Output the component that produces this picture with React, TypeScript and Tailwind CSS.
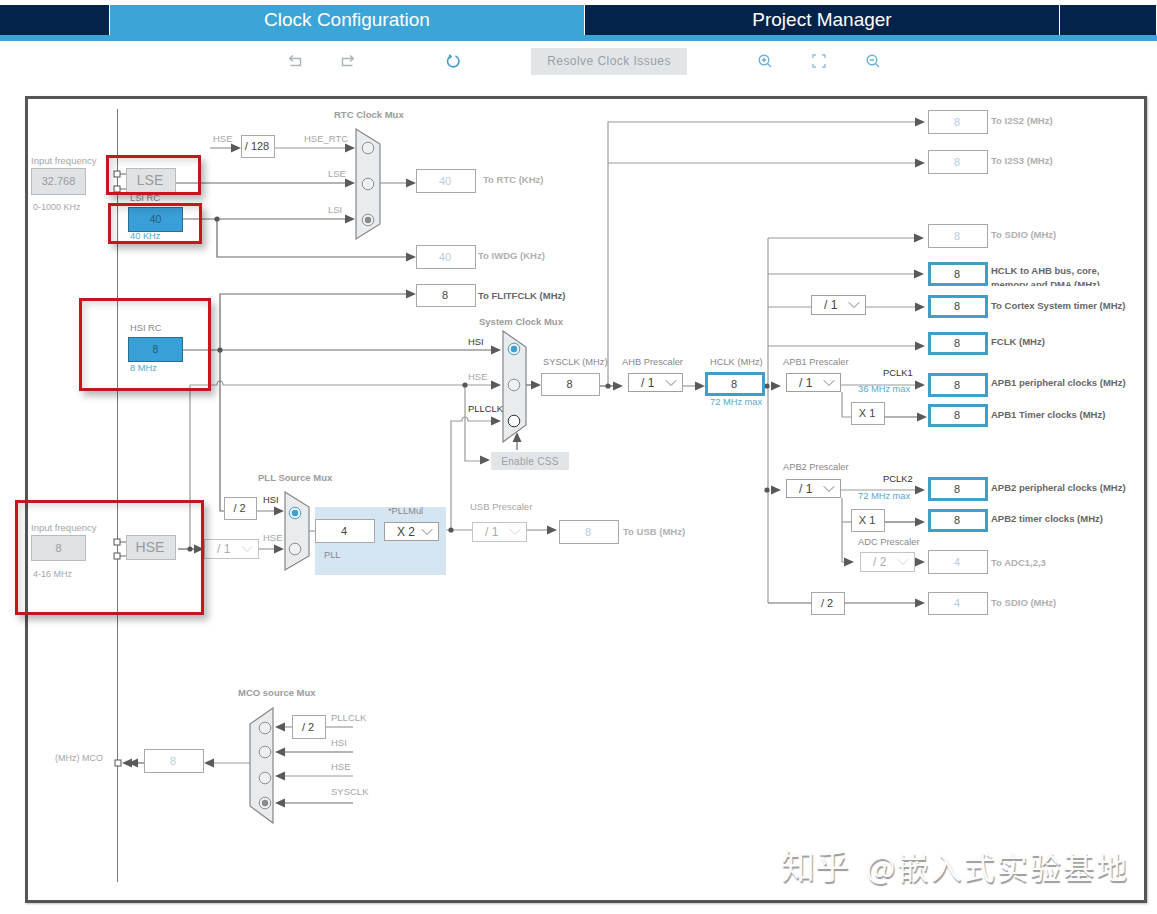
import type { ReactNode } from 'react';
import { ChevronDown } from 'lucide-react';

// everything on the canvas is given in page coordinates, the border box starts at 28,99
const OX = 28;
const OY = 99;

type Tone = 'title' | 'gray' | 'small' | 'dark' | 'blue' | 'strong' | 'muted' | 'outer';

const toneClass: Record<Tone, string> = {
  title: 'font-bold text-[#9c9c9c] text-[9.5px]',
  gray: 'text-[#a6a6a6] text-[9.5px]',
  small: 'text-[#a6a6a6] text-[9px]',
  dark: 'text-[#333] text-[9.4px]',
  blue: 'text-[#55a9cf] text-[9.3px]',
  strong: 'font-bold text-[#666] text-[9.5px]',
  muted: 'font-bold text-[#b0b0b0] text-[9.5px]',
  outer: 'text-[#888] text-[9.3px]',
};

const labels: [number, number, Tone, string][] = [
  [334, 115, 'title', 'RTC Clock Mux'],
  [213, 139, 'gray', 'HSE'],
  [304, 139, 'gray', 'HSE_RTC'],
  [31, 161, 'gray', 'Input frequency'],
  [33, 207, 'small', '0-1000 KHz'],
  [328, 174, 'gray', 'LSE'],
  [328, 210, 'gray', 'LSI'],
  [130, 199, 'outer', 'LSI RC'],
  [130, 237, 'blue', '40 KHz'],
  [483, 180, 'muted', 'To RTC (KHz)'],
  [478, 256, 'muted', 'To IWDG (KHz)'],
  [478, 296, 'strong', 'To FLITFCLK (MHz)'],
  [130, 329, 'outer', 'HSI RC'],
  [130, 369, 'blue', '8 MHz'],
  [479, 322, 'title', 'System Clock Mux'],
  [468, 342, 'dark', 'HSI'],
  [468, 377, 'gray', 'HSE'],
  [468, 409, 'dark', 'PLLCLK'],
  [543, 363, 'outer', 'SYSCLK (MHz)'],
  [622, 363, 'outer', 'AHB Prescaler'],
  [710, 363, 'outer', 'HCLK (MHz)'],
  [710, 403, 'blue', '72 MHz max'],
  [783, 363, 'outer', 'APB1 Prescaler'],
  [883, 373, 'dark', 'PCLK1'],
  [858, 390, 'blue', '36 MHz max'],
  [783, 468, 'outer', 'APB2 Prescaler'],
  [883, 479, 'dark', 'PCLK2'],
  [858, 497, 'blue', '72 MHz max'],
  [858, 543, 'outer', 'ADC Prescaler'],
  [258, 478, 'title', 'PLL Source Mux'],
  [263, 500, 'dark', 'HSI'],
  [263, 538, 'gray', 'HSE'],
  [31, 528, 'gray', 'Input frequency'],
  [33, 574, 'small', '4-16 MHz'],
  [388, 512, 'outer', '*PLLMul'],
  [324, 556, 'outer', 'PLL'],
  [470, 507, 'gray', 'USB Prescaler'],
  [623, 532, 'muted', 'To USB (MHz)'],
  [991, 121, 'muted', 'To I2S2 (MHz)'],
  [991, 161, 'muted', 'To I2S3 (MHz)'],
  [991, 235, 'muted', 'To SDIO (MHz)'],
  [991, 271, 'strong', 'HCLK to AHB bus, core,'],
  [991, 306, 'strong', 'To Cortex System timer (MHz)'],
  [991, 342, 'strong', 'FCLK (MHz)'],
  [991, 383, 'strong', 'APB1 peripheral clocks (MHz)'],
  [991, 415, 'strong', 'APB1 Timer clocks (MHz)'],
  [991, 488, 'strong', 'APB2 peripheral clocks (MHz)'],
  [991, 519, 'strong', 'APB2 timer clocks (MHz)'],
  [991, 563, 'muted', 'To ADC1,2,3'],
  [991, 603, 'muted', 'To SDIO (MHz)'],
  [238, 693, 'title', 'MCO source Mux'],
  [331, 718, 'gray', 'PLLCLK'],
  [331, 743, 'gray', 'HSI'],
  [331, 767, 'gray', 'HSE'],
  [331, 792, 'gray', 'SYSCLK'],
  [55, 758, 'small', '(MHz) MCO'],
];

type BoxKind = 'off' | 'on' | 'plain' | 'input' | 'source' | 'rc';

const boxClass: Record<BoxKind, string> = {
  off: 'bg-white border border-[#a8a8a8] pr-[2px] text-[#b9cdda] text-[11px]',
  on: 'bg-white border-[3px] border-[#3f9fc9] pr-[2px] text-[#444] text-[11px]',
  plain: 'bg-white border border-[#a8a8a8] pr-[2px] text-[#444] text-[11px]',
  input: 'bg-[#dfe3e6] border border-[#b9bcbf] text-[#9a9a9a] text-[11px]',
  source: 'bg-[#dfe3e6] border border-[#b9bcbf] pr-[2px] text-[#9a9a9a] text-[14px]',
  rc: 'bg-[#399fd8] border border-[#2c6d8c] text-[#2d5a72] text-[10.5px]',
};

const boxes: [number, number, number, number, BoxKind, string][] = [
  [241, 135, 34, 23, 'plain', '/ 128'],
  [416, 169, 60, 24, 'off', '40'],
  [416, 245, 60, 24, 'off', '40'],
  [416, 284, 60, 23, 'plain', '8'],
  [31, 168, 55, 27, 'input', '32.768'],
  [126, 168, 50, 25, 'source', 'LSE'],
  [128, 207, 55, 25, 'rc', '40'],
  [128, 337, 55, 25, 'rc', '8'],
  [31, 535, 55, 26, 'input', '8'],
  [126, 535, 50, 25, 'source', 'HSE'],
  [224, 497, 33, 23, 'plain', '/ 2'],
  [315, 519, 60, 24, 'plain', '4'],
  [541, 373, 59, 23, 'plain', '8'],
  [705, 372, 60, 24, 'on', '8'],
  [559, 520, 60, 24, 'off', '8'],
  [928, 110, 60, 24, 'off', '8'],
  [928, 150, 60, 24, 'off', '8'],
  [928, 224, 60, 24, 'off', '8'],
  [928, 262, 60, 24, 'on', '8'],
  [928, 295, 60, 23, 'on', '8'],
  [928, 332, 60, 23, 'on', '8'],
  [928, 373, 60, 24, 'on', '8'],
  [928, 404, 60, 23, 'on', '8'],
  [928, 477, 60, 24, 'on', '8'],
  [928, 509, 60, 23, 'on', '8'],
  [928, 550, 60, 24, 'off', '4'],
  [928, 592, 60, 23, 'off', '4'],
  [851, 402, 34, 23, 'plain', 'X 1'],
  [851, 509, 34, 23, 'plain', 'X 1'],
  [811, 592, 34, 23, 'plain', '/ 2'],
  [292, 715, 34, 24, 'plain', '/ 2'],
  [144, 749, 60, 24, 'off', '8'],
];

const selects: [number, number, number, number, string, boolean][] = [
  [204, 539, 55, 20, '/ 1', true],
  [384, 522, 55, 19, 'X 2', false],
  [472, 522, 55, 20, '/ 1', true],
  [628, 373, 55, 19, '/ 1', false],
  [786, 373, 55, 19, '/ 1', false],
  [786, 479, 55, 19, '/ 1', false],
  [811, 295, 55, 20, '/ 1', false],
  [860, 552, 55, 20, '/ 2', true],
];

const redBoxes: [number, number, number, number][] = [
  [106, 155, 95, 40],
  [108, 203, 94, 41],
  [79, 298, 132, 93],
  [15, 500, 189, 115],
];

const lightWires = [
  'M210 148H232', 'M275 148H347', 'M380 183H406',
  'M608 386V122H916', 'M608 163H916',
  'M768 238V603', 'M768 238H915', 'M768 274H915', 'M768 307H811', 'M866 307H916', 'M768 346H916',
  'M683 386H696', 'M841 385H916', 'M841 490H916', 'M842 392V417H851', 'M842 498V562H846', 'M842 522H851',
  'M190 549V385H217a3 4 0 0 1 6 0H492',
  'M257 511H275', 'M259 549H275', 'M309 531H315', 'M375 530H384', 'M439 530H472', 'M527 530H548',
  'M451 530V421H462a3 4 0 0 1 6 0H492',
  'M465 385V461H481',
  'M285 727H292', 'M326 727H353', 'M285 776H353', 'M250 763H214',
];

const darkWires = [
  'M176 183H347', 'M183 219H347', 'M217 219V257H407',
  'M224 511H220V294H407',
  'M183 350H492', 'M178 549H198', 'M526 385H532', 'M600 386H613',
  'M885 417H918', 'M885 522H916', 'M845 603H916', 'M768 603H811',
  'M517 450V440', 'M285 752H353', 'M285 803H353', 'M144 763H134',
  'M120 174H126M120 189H126M120 542H126M120 556H126',
];

// arrow tips pointing right
const rightTips: [number, number][] = [
  [241, 148], [355, 148], [355, 183], [355, 219], [416, 183], [416, 257], [416, 294],
  [501, 350], [501, 385], [501, 421], [541, 385], [623, 386], [705, 386], [781, 386], [781, 490],
  [925, 122], [925, 163], [924, 238], [924, 274], [925, 307], [925, 346], [925, 385], [927, 417],
  [925, 490], [925, 522], [854, 562], [925, 562], [925, 603],
  [204, 549], [284, 511], [284, 549], [557, 530], [490, 460],
];

const leftTips: [number, number][] = [
  [275, 727], [275, 752], [275, 776], [275, 803], [204, 763], [122, 763], [128, 763],
];

const dots: [number, number][] = [
  [217, 219], [220, 350], [465, 385], [190, 549], [451, 530], [608, 386], [767, 386], [767, 490],
];

const muxes: [string, [number, number, 'off' | 'blue' | 'gray' | 'dark'][]][] = [
  ['356,129 380,144 380,224 356,239', [[368, 148, 'off'], [368, 184, 'off'], [368, 220, 'gray']]],
  ['503,331 526,347 526,425 503,442', [[514, 349, 'blue'], [514, 385, 'off'], [514, 421, 'dark']]],
  ['285,492 309,507 309,556 285,570', [[295, 513, 'blue'], [295, 549, 'off']]],
  ['273,708 250,724 250,806 273,823', [[265, 728, 'off'], [265, 752, 'off'], [265, 778, 'off'], [265, 803, 'gray']]],
];

const ports: [number, number][] = [
  [117, 174], [117, 189], [117, 542], [117, 556], [118, 763],
];

function Wires() {
  return (
    <svg className="absolute left-[-28px] top-[-99px] pointer-events-none" width={1157} height={914}>
      <path d="M117.5 109V882" stroke="#777" fill="none" />
      {lightWires.map((d) => (
        <path key={d} d={d} stroke="#9a9a9a" strokeWidth={1.2} fill="none" />
      ))}
      {darkWires.map((d) => (
        <path key={d} d={d} stroke="#6b6b6b" strokeWidth={1.2} fill="none" />
      ))}
      {rightTips.map(([x, y]) => (
        <polygon key={`r${x}-${y}`} points={`${x - 10},${y - 4.5} ${x},${y} ${x - 10},${y + 4.5}`} fill="#5a5a5a" />
      ))}
      {leftTips.map(([x, y]) => (
        <polygon key={`l${x}-${y}`} points={`${x + 10},${y - 4.5} ${x},${y} ${x + 10},${y + 4.5}`} fill="#5a5a5a" />
      ))}
      <polygon points="517,432 512.5,442 521.5,442" fill="#5a5a5a" />
      {dots.map(([x, y]) => (
        <circle key={`d${x}-${y}`} cx={x} cy={y} r={2.6} fill="#555" />
      ))}
      {muxes.map(([points, radios]) => (
        <g key={points}>
          <polygon points={points} fill="#e8ecef" stroke="#858585" strokeWidth={1.2} />
          {radios.map(([x, y, kind]) => (
            <g key={y}>
              <circle
                cx={x}
                cy={y}
                r={5.8}
                fill={kind === 'dark' ? '#fff' : '#eef1f3'}
                stroke={kind === 'blue' ? '#45a3cf' : kind === 'dark' ? '#333' : '#8f8f8f'}
              />
              {kind === 'blue' && <circle cx={x} cy={y} r={3.2} fill="#3f9fd0" />}
              {kind === 'gray' && <circle cx={x} cy={y} r={3.2} fill="#8a8a8a" />}
            </g>
          ))}
        </g>
      ))}
      {ports.map(([x, y]) => (
        <rect key={`${x}-${y}`} x={x - 3} y={y - 3} width={6} height={6} fill="#fff" stroke="#555" />
      ))}
    </svg>
  );
}

function Label({ x, y, tone, children }: { x: number; y: number; tone: Tone; children: ReactNode }) {
  return (
    <span
      className={`absolute -translate-y-1/2 whitespace-nowrap leading-none ${toneClass[tone]}`}
      style={{ left: x - OX, top: y - OY }}
    >
      {children}
    </span>
  );
}

function Box({ x, y, w, h, kind, children }: { x: number; y: number; w: number; h: number; kind: BoxKind; children: ReactNode }) {
  return (
    <div
      className={`absolute flex items-center justify-center ${boxClass[kind]}`}
      style={{ left: x - OX, top: y - OY, width: w, height: h }}
    >
      {children}
    </div>
  );
}

function Select({ x, y, w, h, text, disabled }: { x: number; y: number; w: number; h: number; text: string; disabled: boolean }) {
  return (
    <div
      className={`absolute flex items-center justify-between bg-white border pl-[12px] pr-[1px] text-[12px] ${
        disabled ? 'border-[#c4c4c4] text-[#aaa]' : 'border-[#a0a0a0] text-[#444]'
      }`}
      style={{ left: x - OX, top: y - OY, width: w, height: h }}
    >
      <span>{text}</span>
      <ChevronDown size={20} strokeWidth={0.9} className={disabled ? 'text-[#c4c4c4]' : 'text-[#555]'} />
    </div>
  );
}

function Tab({ w, active, children }: { w: string; active?: boolean; children?: ReactNode }) {
  return (
    <div
      className={`${w} flex items-center justify-center border-r border-white text-[19px] font-medium text-white ${
        active ? 'bg-[#3ba5d8]' : 'bg-[#03234b]'
      }`}
    >
      {children}
    </div>
  );
}

function ToolIcon({ className, children }: { className: string; children: ReactNode }) {
  return (
    <svg className={className} width={14} height={14} viewBox="0 0 14 14" fill="none" strokeWidth={1.4}>
      {children}
    </svg>
  );
}

export default function App() {
  return (
    <div className="w-[1157px] h-[914px] bg-white font-['Liberation_Sans',Arial,sans-serif] overflow-hidden">
      {/* top tabs */}
      <div className="pt-[5px]">
        <div className="flex h-[30px]">
          <Tab w="w-[110px]" />
          <Tab w="w-[475px]" active>Clock Configuration</Tab>
          <Tab w="w-[475px]">Project Manager</Tab>
          <Tab w="flex-1" />
        </div>
        <div className="h-[6px] bg-[#3ba5d8]" />
      </div>

      {/* toolbar */}
      <div className="flex items-center h-[40px] pl-[288px]">
        <ToolIcon className="stroke-[#aab3b9]">
          <path d="M1.5 4.5H12.5V11.5H2.5M1.5 4.5L5 1.5M1.5 4.5L5 7.5" />
        </ToolIcon>
        <ToolIcon className="stroke-[#aab3b9] ml-[39px]">
          <path d="M12.5 4.5H1.5V11.5H11.5M12.5 4.5L9 1.5M12.5 4.5L9 7.5" />
        </ToolIcon>
        <ToolIcon className="stroke-[#3f9fc9] ml-[91px]">
          <path d="M4.4 2.2A5.7 5.7 0 1 0 9.5 1.9" strokeWidth={1.6} />
          <path d="M3 0.8L5.2 2.4L3.4 4.4" />
        </ToolIcon>
        <button className="ml-[71px] w-[156px] h-[27px] bg-[#e2e5e8] text-[12px] tracking-[0.45px] text-[#9aa0a5]">
          Resolve Clock Issues
        </button>
        <ToolIcon className="stroke-[#6fb3d2] ml-[71px]">
          <circle cx={6} cy={6} r={4.8} />
          <path d="M9.5 9.5L13 13M6 3.8V8.2M3.8 6H8.2" />
        </ToolIcon>
        <ToolIcon className="stroke-[#8fc0d8] ml-[40px]">
          <path d="M1 4V1H4M10 1H13V4M13 10V13H10M4 13H1V10" />
        </ToolIcon>
        <ToolIcon className="stroke-[#6fb3d2] ml-[40px]">
          <circle cx={6} cy={6} r={4.8} />
          <path d="M9.5 9.5L13 13M3.8 6H8.2" />
        </ToolIcon>
      </div>

      {/* clock tree canvas */}
      <div className="relative ml-[25px] mt-[15px] w-[1122px] h-[807px] border-[3px] border-[#555] shadow-[1px_1px_2px_rgba(0,0,0,0.25)]">
        <Wires />

        {/* PLL panel */}
        <div className="absolute left-[287px] top-[408px] w-[131px] h-[68px] bg-[#d6e5f2]" />

        {/* Enable CSS button */}
        <div className="absolute left-[463px] top-[353px] w-[78px] h-[18px] flex items-center justify-center bg-[#e2e5e8] text-[10px] tracking-[0.3px] text-[#9a9fa3]">
          Enable CSS
        </div>

        {boxes.map(([x, y, w, h, kind, text]) => (
          <Box key={`${x}-${y}`} x={x} y={y} w={w} h={h} kind={kind}>{text}</Box>
        ))}
        {selects.map(([x, y, w, h, text, disabled]) => (
          <Select key={`${x}-${y}`} x={x} y={y} w={w} h={h} text={text} disabled={disabled} />
        ))}
        {labels.map(([x, y, tone, text]) => (
          <Label key={`${x}-${y}-${text}`} x={x} y={y} tone={tone}>{text}</Label>
        ))}

        {/* second line of this label is cut by its row */}
        <div className="absolute left-[963px] top-[179px] h-[8px] overflow-hidden">
          <span className="block whitespace-nowrap leading-[13px] font-bold text-[#666] text-[9.5px]">
            memory and DMA (MHz)
          </span>
        </div>

        {redBoxes.map(([x, y, w, h]) => (
          <div
            key={`${x}-${y}`}
            className="absolute border-[3px] border-[#c4161f] shadow-[4px_5px_7px_rgba(0,0,0,0.28),inset_4px_4px_7px_rgba(0,0,0,0.12)]"
            style={{ left: x - OX, top: y - OY, width: w, height: h }}
          />
        ))}

        {/* watermark */}
        <div className="absolute left-[753px] top-[749px] flex items-center whitespace-nowrap leading-none text-[#fbfbfb] [text-shadow:1px_2px_1px_#9a9a9a] font-['Noto_Sans_CJK_SC','Liberation_Sans',sans-serif]">
          <span className="text-[34px]">知乎</span>
          <span className="ml-[17px] text-[31px] tracking-[2.1px]">@嵌入式实验基地</span>
        </div>
      </div>
    </div>
  );
}
